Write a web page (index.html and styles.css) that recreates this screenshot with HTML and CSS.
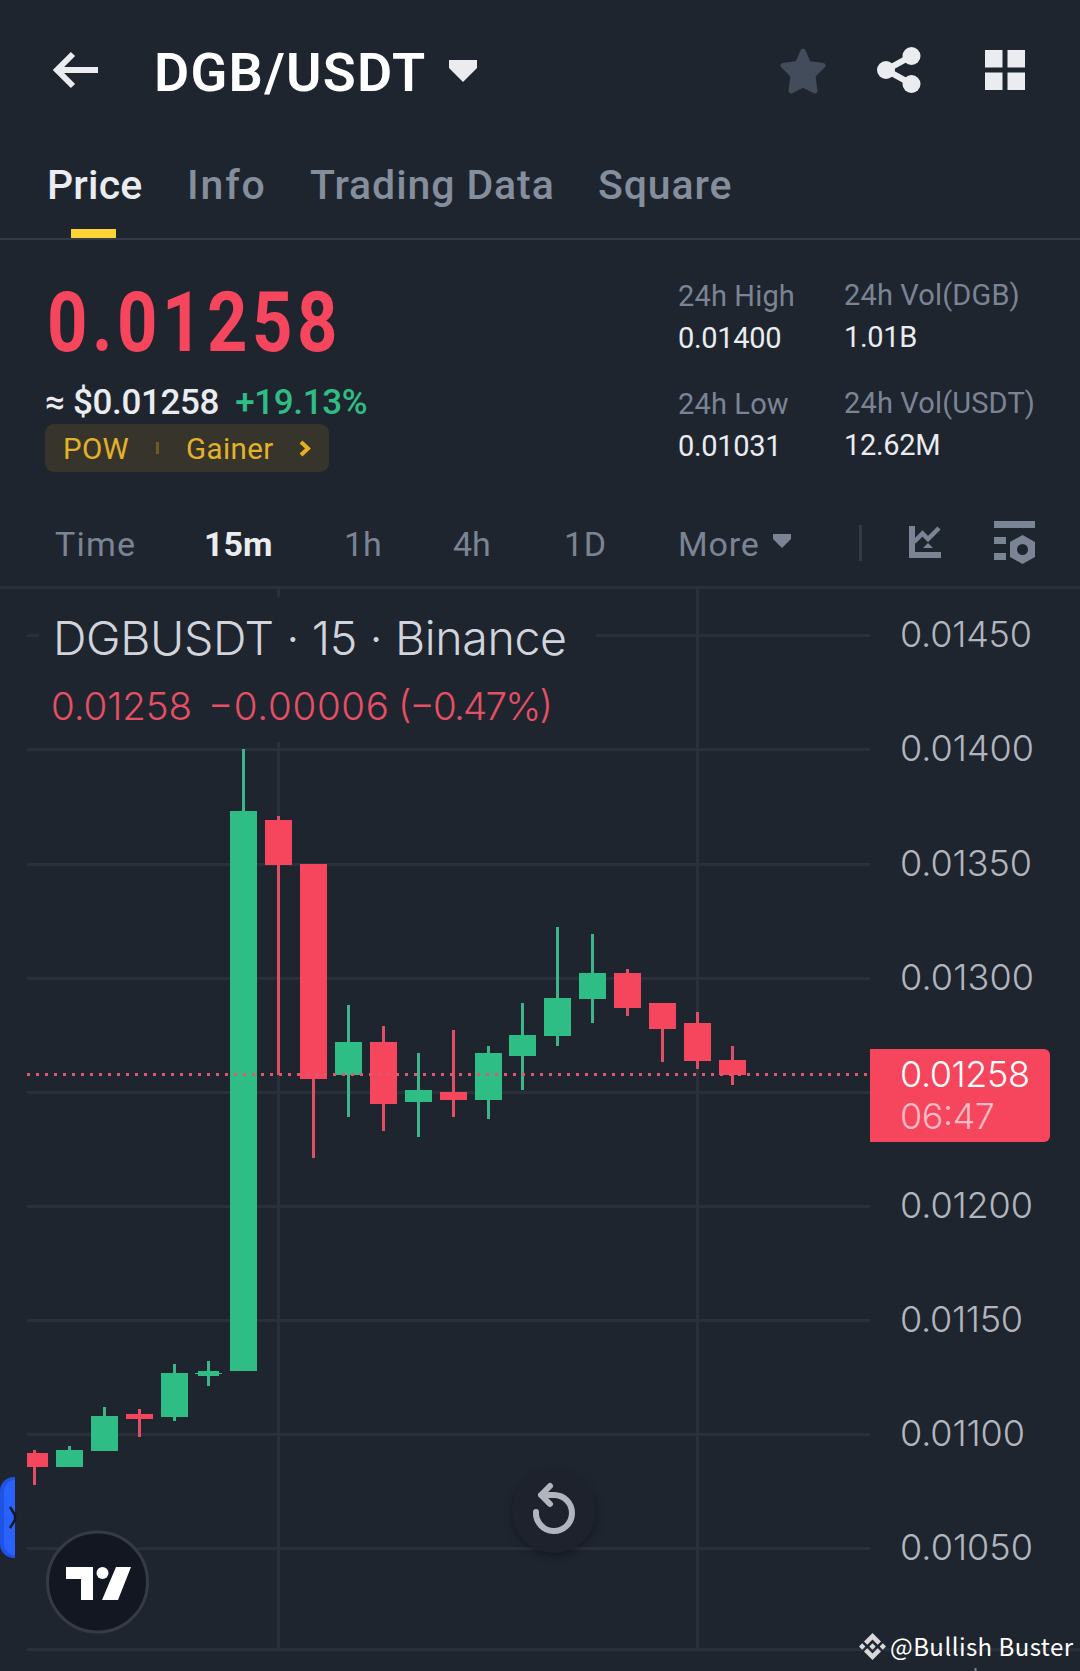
FILE: index.html
```html
<!DOCTYPE html>
<html lang="en">
<head>
<meta charset="utf-8">
<title>DGB/USDT</title>
<link rel="stylesheet" href="styles.css">
</head>
<body>
<main class="app">
  <header class="topbar">
    <svg class="back" viewBox="0 0 46 38" width="46" height="38"><path d="M46 19H6M21 3L5 19L21 35" fill="none" stroke="#eaecef" stroke-width="6"/></svg>
    <h1 class="pair"><span>DGB/USDT</span></h1>
    <svg class="pair-caret" viewBox="0 0 28 22" width="28" height="22"><path d="M0 0H28V8L14 22L0 8Z" fill="#eaecef"/></svg>
    <svg class="star" viewBox="0 0 46 46" width="46" height="46"><path d="M23 3L28.5 15.500L43 17.500L33 27.500L35 43L23 37L11 43L13 27.500L3 17.500L17.500 15.500Z" fill="#434c5a" stroke="#434c5a" stroke-width="5" stroke-linejoin="round"/></svg>
    <svg class="share" viewBox="0 0 44 46" width="44" height="46"><path d="M34.500 9L9 23L34.500 37" fill="none" stroke="#eaecef" stroke-width="6"/><g fill="#eaecef"><circle cx="9" cy="23" r="9"/><circle cx="34.500" cy="9" r="9"/><circle cx="34.500" cy="37" r="9"/></g></svg>
    <svg class="grid-icon" viewBox="0 0 40 40" width="40" height="40"><path d="M0 0H17.500V17.500H0ZM22.500 0H40V17.500H22.500ZM0 22.500H17.500V40H0ZM22.500 22.500H40V40H22.500Z" fill="#eaecef"/></svg>
  </header>

  <nav class="tabs">
    <a class="tab tab-active"><span>Price</span></a>
    <a class="tab tab-info"><span>Info</span></a>
    <a class="tab"><span>Trading Data</span></a>
    <a class="tab"><span>Square</span></a>
  </nav>

  <section class="summary">
    <div class="quote">
      <div class="last">0.01258</div>
      <div class="change"><span class="usd">≈ $0.01258</span><span class="pct">+19.13%</span></div>
      <div class="tags">
        <span class="tag-pow">POW</span><i class="tag-sep"></i><span class="tag-gainer">Gainer</span>
        <svg viewBox="0 0 12 17" width="12" height="17"><path d="M2 2L9 8.500L2 15" fill="none" stroke="#e5b020" stroke-width="4"/></svg>
      </div>
    </div>
    <dl class="stats">
      <div class="stat"><dt>24h High</dt><dd>0.01400</dd></div>
      <div class="stat stat-up"><dt>24h Vol(DGB)</dt><dd>1.01B</dd></div>
      <div class="stat"><dt>24h Low</dt><dd>0.01031</dd></div>
      <div class="stat stat-up"><dt>24h Vol(USDT)</dt><dd>12.62M</dd></div>
    </dl>
  </section>

  <nav class="frames">
    <span class="frame">Time</span>
    <span class="frame frame-active">15m</span>
    <span class="frame">1h</span>
    <span class="frame">4h</span>
    <span class="frame">1D</span>
    <span class="frame">More</span>
    <svg class="more-caret" viewBox="0 0 18 14" width="18" height="14"><path d="M0 0H18V5L9 14L0 5Z" fill="#7b8494"/></svg>
    <i class="frame-sep"></i>
    <svg class="line-icon" viewBox="0 0 32 32" width="32" height="32"><g fill="#7b8494"><path d="M0 0H6V26H32V32H0Z"/><path d="M14 22L19 17L24 22Z"/></g><path d="M5 16L13.500 7.500L19 13L30 2" fill="none" stroke="#7b8494" stroke-width="4.500"/></svg>
    <svg class="set-icon" viewBox="0 0 41 43" width="41" height="43"><path fill="#7b8494" fill-rule="evenodd" d="M0 0H41V7H0ZM0 16H12V23H0ZM0 32H12V39H0ZM28.500 14L41 21V36L28.500 43L16 36V21ZM28.500 23A5.500 5.500 0 1 0 28.500 34A5.500 5.500 0 1 0 28.500 23Z"/></svg>
  </nav>

  <section class="chart">
    <svg viewBox="0 586 1080 1085" width="1080" height="1085">
      <g fill="#2a303a">
        <rect x="0" y="586" width="1080" height="3"/>
        <rect x="277" y="586" width="3" height="11"/><rect x="277" y="742" width="3" height="907"/>
        <rect x="696" y="586" width="3" height="1063"/>
        <rect x="27" y="634" width="12" height="3"/><rect x="596" y="634" width="274" height="3"/>
        <rect x="27" y="748" width="843" height="3"/>
        <rect x="27" y="863" width="843" height="3"/>
        <rect x="27" y="977" width="843" height="3"/>
        <rect x="27" y="1091" width="843" height="3"/>
        <rect x="27" y="1205" width="843" height="3"/>
        <rect x="27" y="1319" width="843" height="3"/>
        <rect x="27" y="1433" width="843" height="3"/>
        <rect x="27" y="1547" width="843" height="3"/>
        <rect x="27" y="1648" width="1053" height="3"/>
      </g>
      <g class="wick-down">
        <path d="M34.500 1450V1485M139.500 1409V1437M278.500 816V1075M313.500 864V1158M383.500 1026V1131M453.500 1030V1117M627.500 969V1016M662.500 1003V1062M697.500 1012V1069M732.500 1046V1085"/>
      </g>
      <g class="wick-up">
        <path d="M69.500 1446V1467M104.500 1407V1451M174.500 1364V1421M208.500 1361V1386M243.500 749V1371M348.500 1005V1117M418.500 1053V1137M488.500 1046V1119M522.500 1003V1090M557.500 927V1046M592.500 934V1023"/>
      </g>
      <g class="down">
        <rect x="27" y="1453" width="21" height="14"/>
        <rect x="126" y="1414" width="27" height="5"/>
        <rect x="265" y="820" width="27" height="45"/>
        <rect x="300" y="864" width="27" height="215"/>
        <rect x="370" y="1042" width="27" height="62"/>
        <rect x="440" y="1092" width="27" height="8"/>
        <rect x="614" y="973" width="27" height="35"/>
        <rect x="649" y="1003" width="27" height="26"/>
        <rect x="684" y="1023" width="27" height="38"/>
        <rect x="719" y="1060" width="27" height="15"/>
      </g>
      <g class="up">
        <rect x="56" y="1450" width="27" height="17"/>
        <rect x="91" y="1416" width="27" height="35"/>
        <rect x="161" y="1373" width="27" height="44"/>
        <rect x="198" y="1371" width="21" height="5"/><rect x="195" y="1373" width="27" height="1"/>
        <rect x="230" y="811" width="27" height="560"/>
        <rect x="335" y="1042" width="27" height="33"/>
        <rect x="405" y="1090" width="27" height="12"/>
        <rect x="475" y="1053" width="27" height="47"/>
        <rect x="509" y="1035" width="27" height="21"/>
        <rect x="544" y="998" width="27" height="38"/>
        <rect x="579" y="973" width="27" height="26"/>
      </g>
      <path d="M27 1074.500H870" stroke="#dd586b" stroke-width="3" stroke-dasharray="3 6"/>

      <text class="legend" x="53" y="655" textLength="514">DGBUSDT · 15 · Binance</text>
      <g class="delta">
        <text x="51" y="720" textLength="141">0.01258</text>
        <text x="208" y="720" textLength="181">−0.00006</text>
        <text x="398" y="720" textLength="155">(−0.47%)</text>
      </g>
      <g class="axis">
        <text x="900" y="647" textLength="132">0.01450</text>
        <text x="900" y="761" textLength="134">0.01400</text>
        <text x="900" y="876" textLength="132">0.01350</text>
        <text x="900" y="990" textLength="134">0.01300</text>
        <text x="900" y="1218" textLength="133">0.01200</text>
        <text x="900" y="1332" textLength="123">0.01150</text>
        <text x="900" y="1446" textLength="125">0.01100</text>
        <text x="900" y="1560" textLength="133">0.01050</text>
      </g>
      <path d="M870 1049H1044A6 6 0 0 1 1050 1055V1136A6 6 0 0 1 1044 1142H870Z" fill="#f6465d"/>
      <g class="axis">
        <text class="tag-price" x="900" y="1087" textLength="130">0.01258</text>
        <text class="tag-time" x="900" y="1129" textLength="95">06:47</text>
      </g>

      <path d="M16 1477H14A14 14 0 0 0 0 1491V1544A14 14 0 0 0 14 1558H15V1477Z" fill="#1e53e5"/>
      <path d="M15 1480A11 11 0 0 0 4 1491V1544A11 11 0 0 0 15 1555Z" fill="#2962ff"/>
      <path d="M10 1507L15 1515V1520L10 1528" fill="none" stroke="#131722" stroke-width="2.500"/>

      <circle cx="97.500" cy="1582" r="50" fill="#131722" stroke="#363a45" stroke-width="3"/>
      <path d="M66 1567H93V1600H81V1579H66ZM116 1567H131L118 1600H102Z" fill="#fff"/>
      <circle cx="102.500" cy="1573" r="6" fill="#fff"/>

      <circle class="reset" cx="554" cy="1511" r="42"/>
      <path d="M536 1512A18 18 0 1 0 554 1495H541M550 1486L541 1495L550 1504" fill="none" stroke="#b2b5be" stroke-width="6" stroke-linecap="round" stroke-linejoin="round"/>

      <g fill="#d9d9d9">
        <path d="M872.500 1633L881 1641.500L877.700 1644.800L872.500 1639.600L867.300 1644.800L864 1641.500ZM872.500 1660L881 1651.500L877.700 1648.200L872.500 1653.400L867.300 1648.200L864 1651.500Z"/>
        <path d="M872.500 1643.300L875.700 1646.500L872.500 1649.700L869.300 1646.500ZM862.200 1643.300L865.400 1646.500L862.200 1649.700L859 1646.500ZM882.800 1643.300L886 1646.500L882.800 1649.700L879.600 1646.500Z"/>
      </g>
      <text class="credit" x="890" y="1656" textLength="183">@Bullish Buster</text>
      <rect x="974.500" y="1668" width="2" height="3" fill="#7b8494"/>
    </svg>
  </section>
</main>
</body>
</html>
```
FILE: styles.css
```css
* { box-sizing: border-box; margin: 0; padding: 0; }

body {
  width: 1080px;
  background: #1f252f;
  color: #eaecef;
  font-family: Roboto, "Liberation Sans", sans-serif;
  overflow: hidden;
}

span { white-space: nowrap; }

.app { display: flex; flex-direction: column; width: 1080px; height: 1671px; }

/* Title bar */
.topbar { display: flex; align-items: center; height: 144px; padding: 0 55px 4px 52px; }
.back { margin-right: 56px; }
.pair { width: 295px; padding-top: 5px; font-size: 54px; line-height: 60px; font-weight: 600; letter-spacing: 1.3px; color: #fff; }
.pair-caret { margin: 2px 303px 0 0; }
.star { margin: 1px 51px 0 0; }
.share { margin-right: 64px; }

/* Section tabs */
.tabs {
  display: grid;
  grid-template-columns: 140px 123px 288px 200px;
  height: 96px;
  padding-left: 47px;
  border-bottom: 2px solid #333b46;
}
.tab { position: relative; font-size: 41px; line-height: 82px; font-weight: 500; letter-spacing: 0.9px; color: #848e9c; }
.tab-info { letter-spacing: 1.9px; }
.tab-active { letter-spacing: 0.2px; color: #eaecef; }
.tab-active::after {
  content: "";
  position: absolute;
  left: 24px;
  bottom: 0;
  width: 45px;
  height: 9px;
  background: #fcd535;
}

/* Price summary */
.summary { display: flex; height: 262px; }
.quote { width: 678px; padding: 41px 0 0 45px; }
.last {
  height: 82px;
  margin-left: 2px;
  font-size: 84px;
  line-height: 84px;
  font-weight: 700;
  letter-spacing: 5.4px;
  color: #f6465d;
  transform: scaleX(0.84);
  transform-origin: left;
}
.change { display: flex; gap: 16px; height: 61px; font-size: 35px; line-height: 80px; font-weight: 500; letter-spacing: -0.35px; }
.pct { color: #2ebd85; }
.tags {
  display: flex;
  align-items: center;
  width: 284px;
  height: 48px;
  padding-left: 18px;
  border-radius: 9px;
  background: #37342b;
  color: #e3b22a;
  font-size: 29.5px;
  line-height: 50px;
}
.tag-pow { width: 93px; padding-top: 2px; letter-spacing: 0.3px; }
.tag-sep { width: 3px; height: 12px; margin-right: 27px; background: #6f5a2a; }
.tag-gainer { width: 113px; padding-top: 2px; letter-spacing: 0.4px; }
.stats { display: grid; grid-template-columns: 166px 220px; grid-template-rows: 108px 108px; padding-top: 35px; }
.stat dt { font-size: 29px; line-height: 42px; letter-spacing: 0.15px; color: #7b8494; white-space: nowrap; }
.stat dd { font-size: 29px; line-height: 42px; letter-spacing: -0.3px; }
.stat-up { margin-top: -1px; }

/* Timeframe bar */
.frames { display: flex; align-items: center; height: 84px; padding: 0 0 0 55px; font-size: 34px; color: #7b8494; }
.frame:nth-child(1) { width: 149px; letter-spacing: 1.2px; }
.frame:nth-child(2) { width: 140px; }
.frame:nth-child(3) { width: 109px; }
.frame:nth-child(4) { width: 111px; }
.frame:nth-child(5) { width: 114px; letter-spacing: 0.6px; }
.frame:nth-child(6) { width: 95px; letter-spacing: 0.8px; }
.frame-active { font-weight: 700; color: #eaecef; }
.more-caret { margin-right: 68px; margin-bottom: 6px; }
.frame-sep { width: 3px; height: 36px; margin: 0 47px 3px 0; background: #343b47; }
.line-icon { margin: 0 53px 4px 0; }
.set-icon { margin-bottom: 3px; }

/* Chart */
.chart svg { display: block; }
.up { fill: #2ebd85; }
.down { fill: #f6465d; }
.wick-up { stroke: #3cb688; stroke-width: 3; }
.wick-down { stroke: #e24f64; stroke-width: 3; }
.legend, .delta, .axis { font-family: Inter, "Liberation Sans", sans-serif; font-weight: 300; }
.legend { font-size: 46.5px; fill: #d1d4dc; }
.delta { font-size: 38.5px; fill: #e64f65; }
.axis { font-size: 36px; fill: #b2b5be; }
.tag-price { fill: #fff; }
.tag-time { fill: #fbbcc5; }
.reset { fill: #1e222d; filter: drop-shadow(0 3px 4px rgba(0, 0, 0, 0.35)); }
.credit { font-family: "Noto Sans CJK SC", sans-serif; font-size: 24px; font-weight: 400; fill: #fff; }
```
